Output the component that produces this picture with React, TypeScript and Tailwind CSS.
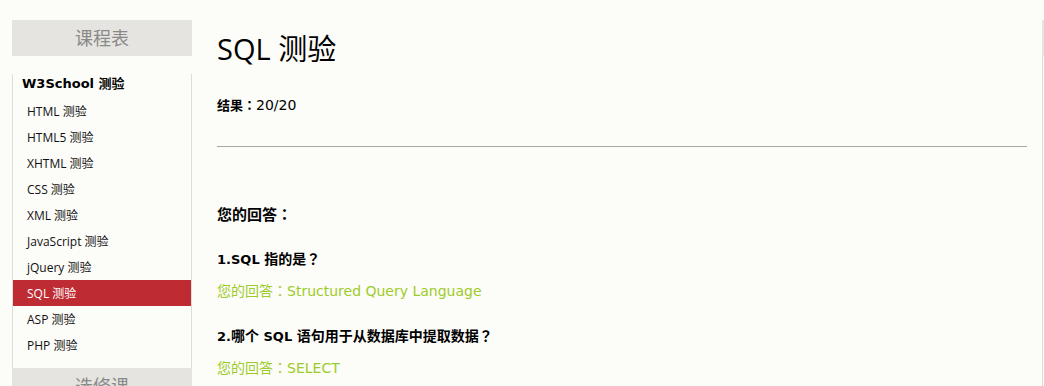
const courses = [
  "HTML 测验",
  "HTML5 测验",
  "XHTML 测验",
  "CSS 测验",
  "XML 测验",
  "JavaScript 测验",
  "jQuery 测验",
  "SQL 测验",
  "ASP 测验",
  "PHP 测验",
];

const answers = [
  { q: "1.SQL 指的是", a: "Structured Query Language" },
  { q: "2.哪个 SQL 语句用于从数据库中提取数据", a: "SELECT" },
];

// full-width punctuation, centred in its cell like the reference
function Punct(props: { c: string }) {
  return (
    <span style={{ fontFamily: '"Noto Sans CJK TC", sans-serif' }}>
      {props.c}
    </span>
  );
}

export default function App() {
  return (
    <div
      className="w-[1044px] h-[386px] overflow-hidden bg-[#fcfcf8] pt-5 pl-3 flex items-start text-black"
      style={{ fontFamily: '"Open Sans", "Noto Sans CJK SC", sans-serif' }}
    >
      {/* left nav */}
      <div className="w-[180px] shrink-0">
        <div className="h-9 bg-[#e5e4e0] flex items-center justify-center text-[18px] text-[#8a8a8a]">
          课程表
        </div>
        <div className="border-x border-[#dcdcd8] pb-[10px]">
          <h2
            className="pl-[9px] mt-[18px] mb-1 h-5 leading-5 text-[13px] font-bold"
            style={{ fontFamily: '"DejaVu Sans", "Noto Sans CJK SC", sans-serif' }}
          >
            W3School 测验
          </h2>
          <ul>
            {courses.map((c) => (
              <li
                key={c}
                className={
                  c === "SQL 测验"
                    ? "h-[26px] leading-[27px] pl-[14px] text-[12px] bg-[#be2b32] text-white"
                    : "h-[26px] leading-[27px] pl-[14px] text-[12px] text-[#111]"
                }
              >
                {c}
              </li>
            ))}
          </ul>
        </div>
        <div className="h-9 bg-[#e5e4e0] flex items-center justify-center text-[18px] text-[#8a8a8a]">
          选修课
        </div>
      </div>

      {/* main */}
      <div
        className="w-[850px] shrink-0 pl-[25px] pr-[15px]"
        style={{ fontFamily: '"DejaVu Sans", "Noto Sans CJK SC", sans-serif' }}
      >
        <h1
          className="mt-[11px] h-9 leading-9 text-[29px]"
          style={{ fontFamily: '"Open Sans", "Noto Sans CJK SC", sans-serif' }}
        >
          SQL 测验
        </h1>
        <p className="mt-[28px] h-5 leading-5 text-[13px]">
          <b>
            结果
            <Punct c="：" />
          </b>
          <span className="text-[14px]">20/20</span>
        </p>
        <hr className="mt-[31px] border-0 h-px bg-[#a8a8a8]" />
        <h3 className="mt-[56px] h-[22px] leading-[22px] text-[15px] font-bold">
          您的回答
          <Punct c="：" />
        </h3>
        {answers.map((x, i) => (
          <div key={x.q}>
            <p
              className={
                i === 0
                  ? "mt-[23px] h-5 leading-5 text-[13px] font-bold"
                  : "mt-[25px] h-5 leading-5 text-[13px] font-bold"
              }
            >
              {x.q.split(/([\u4e00-\u9fff]+)/).map((part, j) =>
                /[\u4e00-\u9fff]/.test(part) ? (
                  <span key={j} className="text-[14px]">
                    {part}
                  </span>
                ) : (
                  part
                )
              )}
              <span className="text-[14px]">
                <Punct c="？" />
              </span>
            </p>
            <p className="mt-3 h-5 leading-5 text-[14px] text-[#9ccc2a]">
              您的回答
              <Punct c="：" />
              {x.a}
            </p>
          </div>
        ))}
      </div>

      {/* right nav edge */}
      <div className="w-[180px] shrink-0">
        <div className="h-9 bg-[#e5e4e0]" />
        <div className="h-[400px] border-l border-[#dcdcd8]" />
      </div>
    </div>
  );
}
